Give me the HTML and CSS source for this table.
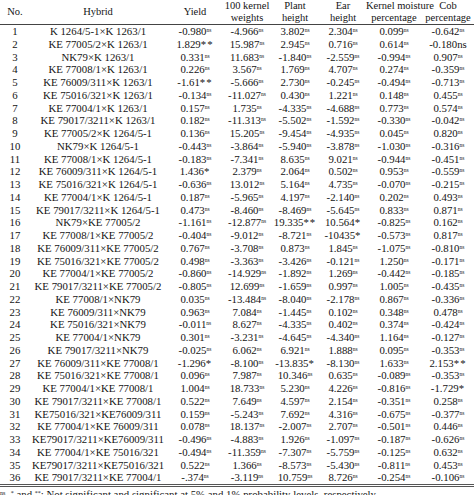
FILE: index.html
```html
<!DOCTYPE html>
<html>
<head>
<meta charset="utf-8">
<link rel="stylesheet" href="styles.css">
</head>
<body>
<table class="tbl">
<colgroup>
<col class="c-no"><col class="c-hy"><col class="c-y"><col class="c-k"><col class="c-p"><col class="c-e"><col class="c-m"><col class="c-c">
</colgroup>
<thead>
<tr><th>No.</th><th>Hybrid</th><th>Yield</th><th>100 kernel<br>weights</th><th>Plant<br>height</th><th>Ear<br>height</th><th>Kernel moisture<br>percentage</th><th>Cob<br>percentage</th></tr>
</thead>
<tbody>
<tr><td>1</td><td>K 1264/5-1×K 1263/1</td><td>-0.980<sup>ns</sup></td><td>-4.966<sup>ns</sup></td><td>3.802<sup>ns</sup></td><td>2.304<sup>ns</sup></td><td>0.099<sup>ns</sup></td><td>-0.642<sup>ns</sup></td></tr>
<tr><td>2</td><td>KE 77005/2×K 1263/1</td><td>1.829<span class="st">**</span></td><td>15.987<sup>ns</sup></td><td>2.945<sup>ns</sup></td><td>0.716<sup>ns</sup></td><td>0.614<sup>ns</sup></td><td>-0.180ns</td></tr>
<tr><td>3</td><td>NK79×K 1263/1</td><td>0.331<sup>ns</sup></td><td>11.683<sup>ns</sup></td><td>-1.840<sup>ns</sup></td><td>-2.559<sup>ns</sup></td><td>-0.994<sup>ns</sup></td><td>0.907<sup>ns</sup></td></tr>
<tr><td>4</td><td>KE 77008/1×K 1263/1</td><td>0.226<sup>ns</sup></td><td>3.567<sup>ns</sup></td><td>1.769<sup>ns</sup></td><td>4.707<sup>ns</sup></td><td>0.274<sup>ns</sup></td><td>-0.359<sup>ns</sup></td></tr>
<tr><td>5</td><td>KE 76009/311×K 1263/1</td><td>-1.61<span class="st">**</span></td><td>-5.666<sup>ns</sup></td><td>2.730<sup>ns</sup></td><td>-0.245<sup>ns</sup></td><td>-0.494<sup>ns</sup></td><td>-0.713<sup>ns</sup></td></tr>
<tr><td>6</td><td>KE 75016/321×K 1263/1</td><td>-0.134<sup>ns</sup></td><td>-11.027<sup>ns</sup></td><td>0.430<sup>ns</sup></td><td>1.221<sup>ns</sup></td><td>0.148<sup>ns</sup></td><td>0.455<sup>ns</sup></td></tr>
<tr><td>7</td><td>KE 77004/1×K 1263/1</td><td>0.157<sup>ns</sup></td><td>1.735<sup>ns</sup></td><td>-4.335<sup>ns</sup></td><td>-4.688<sup>ns</sup></td><td>0.773<sup>ns</sup></td><td>0.574<sup>ns</sup></td></tr>
<tr><td>8</td><td>KE 79017/3211×K 1263/1</td><td>0.182<sup>ns</sup></td><td>-11.313<sup>ns</sup></td><td>-5.502<sup>ns</sup></td><td>-1.592<sup>ns</sup></td><td>-0.330<sup>ns</sup></td><td>-0.042<sup>ns</sup></td></tr>
<tr><td>9</td><td>KE 77005/2×K 1264/5-1</td><td>0.136<sup>ns</sup></td><td>15.205<sup>ns</sup></td><td>-9.454<sup>ns</sup></td><td>-4.935<sup>ns</sup></td><td>0.045<sup>ns</sup></td><td>0.820<sup>ns</sup></td></tr>
<tr><td>10</td><td>NK79×K 1264/5-1</td><td>-0.443<sup>ns</sup></td><td>-3.864<sup>ns</sup></td><td>-5.940<sup>ns</sup></td><td>-3.878<sup>ns</sup></td><td>-1.030<sup>ns</sup></td><td>-0.316<sup>ns</sup></td></tr>
<tr><td>11</td><td>KE 77008/1×K 1264/5-1</td><td>-0.183<sup>ns</sup></td><td>-7.341<sup>ns</sup></td><td>8.635<sup>ns</sup></td><td>9.021<sup>ns</sup></td><td>-0.944<sup>ns</sup></td><td>-0.451<sup>ns</sup></td></tr>
<tr><td>12</td><td>KE 76009/311×K 1264/5-1</td><td>1.436<span class="st">*</span></td><td>2.379<sup>ns</sup></td><td>2.064<sup>ns</sup></td><td>0.502<sup>ns</sup></td><td>0.953<sup>ns</sup></td><td>-0.559<sup>ns</sup></td></tr>
<tr><td>13</td><td>KE 75016/321×K 1264/5-1</td><td>-0.636<sup>ns</sup></td><td>13.012<sup>ns</sup></td><td>5.164<sup>ns</sup></td><td>4.735<sup>ns</sup></td><td>-0.070<sup>ns</sup></td><td>-0.215<sup>ns</sup></td></tr>
<tr><td>14</td><td>KE 77004/1×K 1264/5-1</td><td>0.187<sup>ns</sup></td><td>-5.965<sup>ns</sup></td><td>4.197<sup>ns</sup></td><td>-2.140<sup>ns</sup></td><td>0.202<sup>ns</sup></td><td>0.493<sup>ns</sup></td></tr>
<tr><td>15</td><td>KE 79017/3211×K 1264/5-1</td><td>0.473<sup>ns</sup></td><td>-8.460<sup>ns</sup></td><td>-8.469<sup>ns</sup></td><td>-5.645<sup>ns</sup></td><td>0.833<sup>ns</sup></td><td>0.871<sup>ns</sup></td></tr>
<tr><td>16</td><td>NK79×KE 77005/2</td><td>-1.161<sup>ns</sup></td><td>-12.877<sup>ns</sup></td><td>19.335<span class="st">**</span></td><td>10.564<span class="st">*</span></td><td>-0.825<sup>ns</sup></td><td>0.162<sup>ns</sup></td></tr>
<tr><td>17</td><td>KE 77008/1×KE 77005/2</td><td>-0.404<sup>ns</sup></td><td>-9.012<sup>ns</sup></td><td>-8.721<sup>ns</sup></td><td>-10435<span class="st">*</span></td><td>-0.573<sup>ns</sup></td><td>0.817<sup>ns</sup></td></tr>
<tr><td>18</td><td>KE 76009/311×KE 77005/2</td><td>0.767<sup>ns</sup></td><td>-3.708<sup>ns</sup></td><td>0.873<sup>ns</sup></td><td>1.845<sup>ns</sup></td><td>-1.075<sup>ns</sup></td><td>-0.810<sup>ns</sup></td></tr>
<tr><td>19</td><td>KE 75016/321×KE 77005/2</td><td>0.498<sup>ns</sup></td><td>-3.363<sup>ns</sup></td><td>-3.426<sup>ns</sup></td><td>-0.121<sup>ns</sup></td><td>1.250<sup>ns</sup></td><td>-0.171<sup>ns</sup></td></tr>
<tr><td>20</td><td>KE 77004/1×KE 77005/2</td><td>-0.860<sup>ns</sup></td><td>-14.929<sup>ns</sup></td><td>-1.892<sup>ns</sup></td><td>1.269<sup>ns</sup></td><td>-0.442<sup>ns</sup></td><td>-0.185<sup>ns</sup></td></tr>
<tr><td>21</td><td>KE 79017/3211×KE 77005/2</td><td>-0.805<sup>ns</sup></td><td>12.699<sup>ns</sup></td><td>-1.659<sup>ns</sup></td><td>0.997<sup>ns</sup></td><td>1.005<sup>ns</sup></td><td>-0.435<sup>ns</sup></td></tr>
<tr><td>22</td><td>KE 77008/1×NK79</td><td>0.035<sup>ns</sup></td><td>-13.484<sup>ns</sup></td><td>-8.040<sup>ns</sup></td><td>-2.178<sup>ns</sup></td><td>0.867<sup>ns</sup></td><td>-0.336<sup>ns</sup></td></tr>
<tr><td>23</td><td>KE 76009/311×NK79</td><td>0.963<sup>ns</sup></td><td>7.084<sup>ns</sup></td><td>-1.445<sup>ns</sup></td><td>0.102<sup>ns</sup></td><td>0.348<sup>ns</sup></td><td>0.478<sup>ns</sup></td></tr>
<tr><td>24</td><td>KE 75016/321×NK79</td><td>-0.011<sup>ns</sup></td><td>8.627<sup>ns</sup></td><td>-4.335<sup>ns</sup></td><td>0.402<sup>ns</sup></td><td>0.374<sup>ns</sup></td><td>-0.424<sup>ns</sup></td></tr>
<tr><td>25</td><td>KE 77004/1×NK79</td><td>0.301<sup>ns</sup></td><td>-3.231<sup>ns</sup></td><td>-4.645<sup>ns</sup></td><td>-4.340<sup>ns</sup></td><td>1.164<sup>ns</sup></td><td>-0.127<sup>ns</sup></td></tr>
<tr><td>26</td><td>KE 79017/3211×NK79</td><td>-0.025<sup>ns</sup></td><td>6.062<sup>ns</sup></td><td>6.921<sup>ns</sup></td><td>1.888<sup>ns</sup></td><td>0.095<sup>ns</sup></td><td>-0.353<sup>ns</sup></td></tr>
<tr><td>27</td><td>KE 76009/311×KE 77008/1</td><td>-1.296<span class="st">*</span></td><td>-8.100<sup>ns</sup></td><td>-13.835<span class="st">*</span></td><td>-8.130<sup>ns</sup></td><td>1.633<sup>ns</sup></td><td>2.153<span class="st">**</span></td></tr>
<tr><td>28</td><td>KE 75016/321×KE 77008/1</td><td>0.096<sup>ns</sup></td><td>7.987<sup>ns</sup></td><td>10.346<sup>ns</sup></td><td>0.635<sup>ns</sup></td><td>-0.089<sup>ns</sup></td><td>-0.353<sup>ns</sup></td></tr>
<tr><td>29</td><td>KE 77004/1×KE 77008/1</td><td>1.004<sup>ns</sup></td><td>18.733<sup>ns</sup></td><td>5.230<sup>ns</sup></td><td>4.226<sup>ns</sup></td><td>-0.816<sup>ns</sup></td><td>-1.729<span class="st">*</span></td></tr>
<tr><td>30</td><td>KE 79017/3211×KE 77008/1</td><td>0.522<sup>ns</sup></td><td>7.649<sup>ns</sup></td><td>4.597<sup>ns</sup></td><td>2.154<sup>ns</sup></td><td>-0.351<sup>ns</sup></td><td>0.258<sup>ns</sup></td></tr>
<tr><td>31</td><td>KE75016/321×KE76009/311</td><td>0.159<sup>ns</sup></td><td>-5.243<sup>ns</sup></td><td>7.692<sup>ns</sup></td><td>4.316<sup>ns</sup></td><td>-0.675<sup>ns</sup></td><td>-0.377<sup>ns</sup></td></tr>
<tr><td>32</td><td>KE 77004/1×KE 76009/311</td><td>0.078<sup>ns</sup></td><td>18.137<sup>ns</sup></td><td>-2.007<sup>ns</sup></td><td>2.707<sup>ns</sup></td><td>-0.501<sup>ns</sup></td><td>0.446<sup>ns</sup></td></tr>
<tr><td>33</td><td>KE79017/3211×KE76009/311</td><td>-0.496<sup>ns</sup></td><td>-4.883<sup>ns</sup></td><td>1.926<sup>ns</sup></td><td>-1.097<sup>ns</sup></td><td>-0.187<sup>ns</sup></td><td>-0.626<sup>ns</sup></td></tr>
<tr><td>34</td><td>KE 77004/1×KE 75016/321</td><td>-0.494<sup>ns</sup></td><td>-11.359<sup>ns</sup></td><td>-7.307<sup>ns</sup></td><td>-5.759<sup>ns</sup></td><td>-0.125<sup>ns</sup></td><td>0.632<sup>ns</sup></td></tr>
<tr><td>35</td><td>KE79017/3211×KE75016/321</td><td>0.522<sup>ns</sup></td><td>1.366<sup>ns</sup></td><td>-8.573<sup>ns</sup></td><td>-5.430<sup>ns</sup></td><td>-0.811<sup>ns</sup></td><td>0.453<sup>ns</sup></td></tr>
<tr><td>36</td><td>KE 79017/3211×KE 77004/1</td><td>-.374<sup>ns</sup></td><td>-3.119<sup>ns</sup></td><td>10.759<sup>ns</sup></td><td>8.726<sup>ns</sup></td><td>-0.254<sup>ns</sup></td><td>-0.106<sup>ns</sup></td></tr>
</tbody>
</table>
<p class="note"><sup>ns</sup>, <sup>*</sup> and <sup>**</sup>: Not significant and significant at 5% and 1% probability levels, respectively</p>
</body>
</html>
```
FILE: styles.css
```css
html, body {
  margin: 0;
  padding: 0;
  background: #ffffff;
}
body {
  font-family: "Liberation Serif", "Times New Roman", serif;
  color: #141414;
  width: 474px;
  overflow: hidden;
}
.tbl {
  width: 474px;
  border-collapse: collapse;
  table-layout: fixed;
  font-size: 10.8px;
}
.c-no { width: 30px; }
.c-hy { width: 136px; }
.c-y { width: 58px; }
.c-k { width: 46px; }
.c-p { width: 50px; }
.c-e { width: 46px; }
.c-m { width: 56px; }
.c-c { width: 52px; }
.tbl th {
  font-weight: normal;
  font-size: 10.5px;
  line-height: 12px;
  height: 24px;
  padding: 0;
  text-align: center;
  vertical-align: middle;
  white-space: nowrap;
  border-bottom: 1px solid #444;
}
.tbl td {
  padding: 0;
  height: 12.75px;
  line-height: 12.75px;
  text-align: center;
  white-space: nowrap;
}
.tbl tbody tr:last-child td {
  border-bottom: 3px double #555;
}
.tbl sup {
  font-size: 5.5px;
  line-height: 0;
  vertical-align: 3.5px;
}
.st {
  letter-spacing: 1px;
}
.note {
  margin: 1px 0 0 0;
  font-size: 10.8px;
  line-height: 12px;
  white-space: nowrap;
}
.note sup {
  font-size: 6px;
  line-height: 0;
  vertical-align: 3.5px;
}
```
